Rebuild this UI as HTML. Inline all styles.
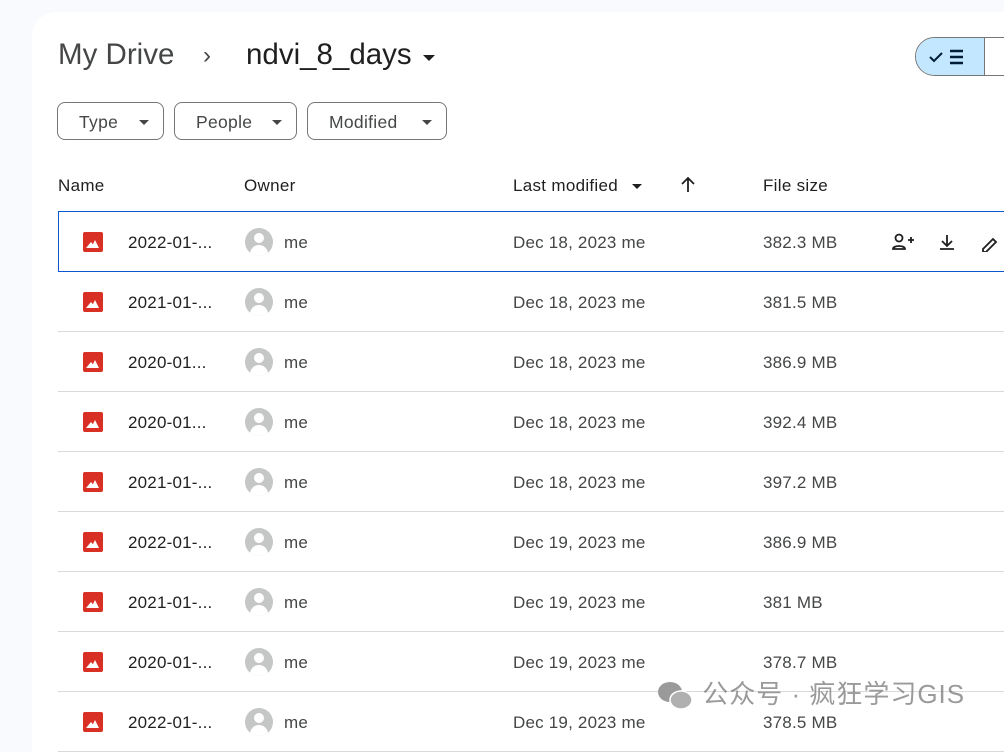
<!DOCTYPE html>
<html><head><meta charset="utf-8"><style>
body{margin:0;width:1004px;height:733px;overflow:hidden;background:#f8fafd;font-family:"Liberation Sans",Arial,sans-serif;color:#1f1f1f;position:relative}
.card{position:absolute;left:32px;top:12px;width:990px;height:740px;background:#fff;border-radius:24px 0 0 0}
.a{position:absolute;white-space:nowrap}
.btn{position:absolute;top:102px;height:38px;border:1px solid #747775;border-radius:8px;box-sizing:border-box;font-size:17.5px;color:#444746;line-height:38px;padding-left:21px;letter-spacing:.3px}
.btn i{position:absolute;right:14px;top:17px;border-left:5px solid transparent;border-right:5px solid transparent;border-top:5px solid #444746}
.row{position:absolute;left:58px;width:960px;height:60px;border-bottom:1px solid #d8dad9;box-sizing:border-box}
.row span{position:absolute;top:1px;line-height:59px;font-size:17px;letter-spacing:.2px}
.ic{position:absolute;left:25px;top:20px;width:20px;height:20px;background:#d93025;border-radius:2px;overflow:hidden}
.ic:after{content:"";position:absolute;left:3px;bottom:4px;width:0;height:0;border-left:5px solid transparent;border-right:5px solid transparent;border-bottom:6px solid #fff}
.ic:before{content:"";position:absolute;left:8px;bottom:4px;width:0;height:0;border-left:4px solid transparent;border-right:4px solid transparent;border-bottom:8px solid #fff}
.av{position:absolute;left:187px;top:16px;width:28px;height:28px;border-radius:50%;background:#c4c7c5;overflow:hidden}
.av:before{content:"";position:absolute;left:9px;top:5px;width:10px;height:10px;border-radius:50%;background:#fff}
.av:after{content:"";position:absolute;left:5px;top:17px;width:18px;height:12px;border-radius:9px 9px 0 0;background:#fff}
.h{position:absolute;top:176px;font-size:17px;color:#1f1f1f;letter-spacing:.3px}
</style></head><body>
<div class="card"></div>
<div class="a" style="left:58px;top:38px;font-size:29.5px;color:#444746">My Drive</div>
<div class="a" style="left:203px;top:42px;font-size:24px;color:#444746">›</div>
<div class="a" style="left:246px;top:38px;font-size:29.5px;color:#1f1f1f">ndvi_8_days</div>
<div class="a" style="left:423px;top:55px;border-left:6px solid transparent;border-right:6px solid transparent;border-top:6px solid #1f1f1f"></div>
<div class="a" style="left:915px;top:37px;width:120px;height:39px;border:1px solid #747775;border-radius:20px;box-sizing:border-box;overflow:hidden">
 <div style="position:absolute;left:0;top:0;width:68px;height:39px;background:#c2e7ff;border-right:1px solid #747775"></div>
 <svg style="position:absolute;left:12px;top:10px" width="40" height="18" viewBox="0 0 40 18"><path d="M2 9l4 4 8-8" fill="none" stroke="#001d35" stroke-width="2"/><path d="M22 3h13M22 9h13M22 15h13" stroke="#001d35" stroke-width="2.4"/></svg>
</div>
<div class="btn" style="left:57px;width:107px">Type<i></i></div>
<div class="btn" style="left:174px;width:123px">People<i></i></div>
<div class="btn" style="left:307px;width:140px">Modified<i></i></div>
<div class="h" style="left:58px">Name</div>
<div class="h" style="left:244px">Owner</div>
<div class="h" style="left:513px">Last modified</div>
<div class="a" style="left:632px;top:184px;border-left:5px solid transparent;border-right:5px solid transparent;border-top:5px solid #1f1f1f"></div>
<svg class="a" style="left:679px;top:176px" width="18" height="18" viewBox="0 0 18 18"><path d="M9 16V3M3 8l6-6 6 6" fill="none" stroke="#1f1f1f" stroke-width="1.8"/></svg>
<div class="h" style="left:763px">File size</div>
<div class="a" style="left:58px;top:211px;width:960px;height:61px;border:1px solid #0b57d0;box-sizing:border-box"></div>
<div style="position:absolute;left:0;top:212px">
<div class="row" style="top:0;border:none"><div class="ic"></div><span style="left:70px">2022-01-...</span><div class="av"></div><span style="left:226px;color:#444746">me</span><span style="left:455px;color:#444746">Dec 18, 2023 me</span><span style="left:705px;color:#444746">382.3 MB</span></div>
</div>
<div style="position:absolute;left:0;top:272px">
<div class="row" style="top:0"><div class="ic"></div><span style="left:70px">2021-01-...</span><div class="av"></div><span style="left:226px;color:#444746">me</span><span style="left:455px;color:#444746">Dec 18, 2023 me</span><span style="left:705px;color:#444746">381.5 MB</span></div>
<div class="row" style="top:60px"><div class="ic"></div><span style="left:70px">2020-01...</span><div class="av"></div><span style="left:226px;color:#444746">me</span><span style="left:455px;color:#444746">Dec 18, 2023 me</span><span style="left:705px;color:#444746">386.9 MB</span></div>
<div class="row" style="top:120px"><div class="ic"></div><span style="left:70px">2020-01...</span><div class="av"></div><span style="left:226px;color:#444746">me</span><span style="left:455px;color:#444746">Dec 18, 2023 me</span><span style="left:705px;color:#444746">392.4 MB</span></div>
<div class="row" style="top:180px"><div class="ic"></div><span style="left:70px">2021-01-...</span><div class="av"></div><span style="left:226px;color:#444746">me</span><span style="left:455px;color:#444746">Dec 18, 2023 me</span><span style="left:705px;color:#444746">397.2 MB</span></div>
<div class="row" style="top:240px"><div class="ic"></div><span style="left:70px">2022-01-...</span><div class="av"></div><span style="left:226px;color:#444746">me</span><span style="left:455px;color:#444746">Dec 19, 2023 me</span><span style="left:705px;color:#444746">386.9 MB</span></div>
<div class="row" style="top:300px"><div class="ic"></div><span style="left:70px">2021-01-...</span><div class="av"></div><span style="left:226px;color:#444746">me</span><span style="left:455px;color:#444746">Dec 19, 2023 me</span><span style="left:705px;color:#444746">381 MB</span></div>
<div class="row" style="top:360px"><div class="ic"></div><span style="left:70px">2020-01-...</span><div class="av"></div><span style="left:226px;color:#444746">me</span><span style="left:455px;color:#444746">Dec 19, 2023 me</span><span style="left:705px;color:#444746">378.7 MB</span></div>
<div class="row" style="top:420px"><div class="ic"></div><span style="left:70px">2022-01-...</span><div class="av"></div><span style="left:226px;color:#444746">me</span><span style="left:455px;color:#444746">Dec 19, 2023 me</span><span style="left:705px;color:#444746">378.5 MB</span></div>
</div>
<svg class="a" style="left:891px;top:232px" width="115" height="20" viewBox="0 0 115 20"><g fill="none" stroke="#1f1f1f" stroke-width="1.8"><circle cx="8" cy="6" r="3.5"/><path d="M2 17c0-4 12-4 12 0z"/><path d="M17 8h6M20 5v6"/><path d="M56 3v10M51 9l5 5 5-5M49 17h14"/><path d="M92 17l10-10 3 3-10 10h-3z"/></g></svg>
<div class="a" style="left:656px;top:674px;font-size:26px;letter-spacing:1px;color:rgba(120,120,120,.75);font-family:'Liberation Sans','Noto Sans CJK SC',sans-serif">
<svg width="38" height="34" viewBox="0 0 38 34" style="vertical-align:middle"><ellipse cx="14" cy="13" rx="12" ry="10" fill="#9a9a9a"/><ellipse cx="25" cy="21" rx="11" ry="9" fill="#b0b0b0" stroke="#fff" stroke-width="1.5"/></svg> 公众号 · 疯狂学习GIS</div>
</body></html>
